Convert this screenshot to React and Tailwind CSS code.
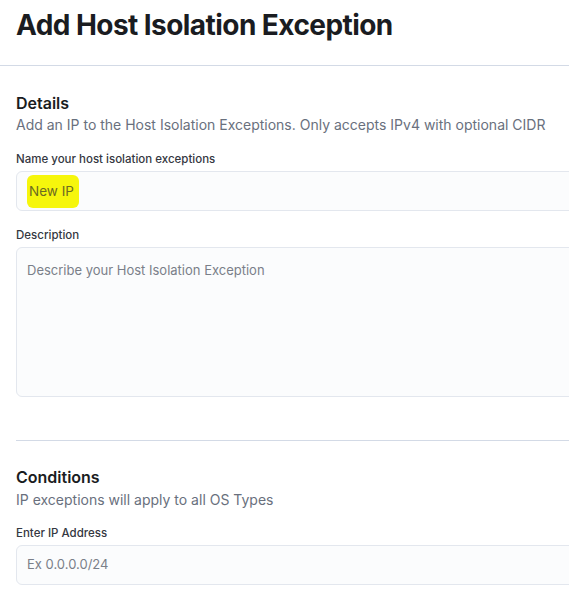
import React from "react";

function Label({ children, className = "" }) {
  return (
    <div className={`text-[11.5px] leading-[16px] font-medium text-[#343741] ${className}`}>{children}</div>
  );
}

export default function App() {
  return (
    <div className="w-[569px] h-[613px] overflow-hidden bg-white [font-family:Inter,'Noto_Sans',sans-serif]">
      <div className="w-[720px]">
        <h1 className="pl-4 pt-[10px] text-[28px] leading-[30px] font-bold text-[#1a1c21] tracking-[-0.02em]">
          Add Host Isolation Exception
        </h1>
        <div className="mt-[25px] h-px bg-[#d3dae6]" />
        <div className="pl-4">
          <h2 className="mt-[27px] text-[16px] leading-[20px] font-semibold text-[#1a1c21]">Details</h2>
          <p className="mt-[2px] text-[14px] leading-[20px] text-[#69707d]">
            Add an IP to the Host Isolation Exceptions. Only accepts IPv4 with optional CIDR
          </p>
          <Label className="mt-[16px]">Name your host isolation exceptions</Label>
          <div className="mt-[4px] h-[40px] rounded-[6px] border border-[#e3e7ee] bg-[#fbfcfd] flex items-center pl-[10px]">
            <span className="inline-flex items-center h-[33px] pl-[2px] pr-[5px] bg-[#f6f60c] rounded-[6px] text-[13.5px] text-[#6c6b22]">
              New IP
            </span>
          </div>
          <Label className="mt-[16px]">Description</Label>
          <div className="mt-[4px] h-[150px] rounded-[6px] border border-[#e3e7ee] bg-[#fbfcfd] px-[10px] pt-[12px] text-[13px] leading-[20px] text-[#7a7f89]">
            Describe your Host Isolation Exception
          </div>
        </div>
        <div className="ml-4 mt-[43px] h-px bg-[#d3dae6]" />
        <div className="pl-4">
          <h2 className="mt-[26px] text-[16px] leading-[20px] font-semibold text-[#1a1c21]">Conditions</h2>
          <p className="mt-[3px] text-[14px] leading-[20px] text-[#69707d]">
            IP exceptions will apply to all OS Types
          </p>
          <Label className="mt-[15px]">Enter IP Address</Label>
          <div className="mt-[4px] h-[40px] rounded-[6px] border border-[#e3e7ee] bg-[#fbfcfd] flex items-center pl-[10px] text-[13px] text-[#7a7f89]">
            Ex 0.0.0.0/24
          </div>
        </div>
      </div>
    </div>
  );
}
